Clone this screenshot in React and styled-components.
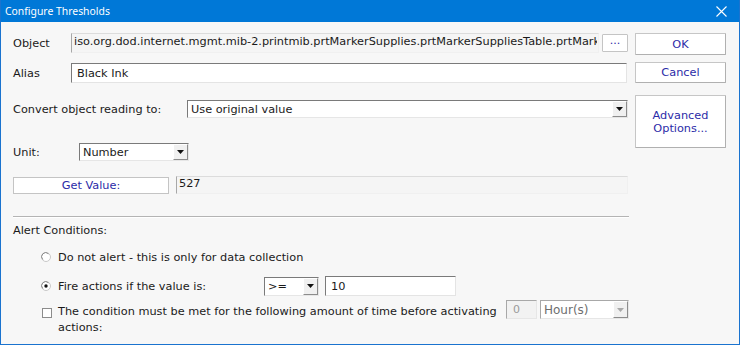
import React from 'react';
import styled, { createGlobalStyle } from 'styled-components';

const GlobalStyle = createGlobalStyle`
    html, body {
        margin: 0;
        padding: 0;
        background: #ffffff;
    }
    * {
        box-sizing: border-box;
    }
`

const OBJECT_PATH = 'iso.org.dod.internet.mgmt.mib-2.printmib.prtMarkerSupplies.prtMarkerSuppliesTable.prtMarkerSuppliesEntry.prtMarkerSuppliesLevel'

// 창 닫기 아이콘
const CloseIcon = () => (
    <svg width="11" height="11" viewBox="0 0 11 11">
        <path d="M0.5 0.5 L10.5 10.5 M10.5 0.5 L0.5 10.5" stroke="#ffffff" strokeWidth="1.1" fill="none" />
    </svg>
)

const Radio = ({ checked }) => (
    <svg width="10" height="10" viewBox="0 0 10 10">
        <circle cx="5" cy="5" r="4.5" fill="#ffffff" stroke="#c8c8c8" strokeWidth="1" />
        <path d="M1.8 7.5 A4 4 0 0 1 7.5 1.8" stroke="#8a8a8a" strokeWidth="1" fill="none" />
        {checked && <circle cx="5" cy="5" r="1.7" fill="#111111" />}
    </svg>
)

const Select = ({ value, width, height = 18, disabled }) => (
    <SelectBox $width={width} $height={height} $disabled={disabled}>
        <SelectText $disabled={disabled}>{value}</SelectText>
        <ArrowBox>
            <svg width="7" height="4" viewBox="0 0 7 4">
                <path d="M0 0 L7 0 L3.5 4 Z" fill={disabled ? '#a8a8a8' : '#111111'} />
            </svg>
        </ArrowBox>
    </SelectBox>
)

const App = () => {
    return (
        <>
            <GlobalStyle />
            <Window>
                <TitleBar>
                    <Title>Configure Thresholds</Title>
                    <CloseIcon />
                </TitleBar>
                <Body>
                    <Main>
                        <Row>
                            <Label $width={58}>Object</Label>
                            <ReadField $width={528} $height={20} readOnly value={OBJECT_PATH} />
                            <SmallBtn>...</SmallBtn>
                        </Row>
                        <Row $top={10}>
                            <Label $width={58}>Alias</Label>
                            <TextField $width={556} $height={20} readOnly value="Black Ink" />
                        </Row>
                        <Row $top={17}>
                            <Label $width={174}>Convert object reading to:</Label>
                            <Select value="Use original value" width={441} />
                        </Row>
                        <Row $top={25}>
                            <Label $width={66}>Unit:</Label>
                            <Select value="Number" width={110} />
                        </Row>
                        <Row $top={15}>
                            <GetBtn>Get Value:</GetBtn>
                            <ReadField $width={452} $height={18} $gap={7} readOnly value="527" />
                        </Row>
                        <Separator />
                        <SectionTitle>Alert Conditions:</SectionTitle>
                        <OptionRow $top={10}>
                            <Radio />
                            <OptionText>Do not alert - this is only for data collection</OptionText>
                        </OptionRow>
                        <OptionRow $top={9}>
                            <Radio checked />
                            <OptionText $width={206}>Fire actions if the value is:</OptionText>
                            <Select value=">=" width={55} height={19} />
                            <TextField $width={131} $height={20} $gap={6} readOnly value="10" />
                        </OptionRow>
                        <CheckRow>
                            <CheckBox />
                            <WrapText>The condition must be met for the following amount of time before activating actions:</WrapText>
                            <TimeBox>
                                <DisabledField>0</DisabledField>
                                <Select value="Hour(s)" width={89} height={19} disabled />
                            </TimeBox>
                        </CheckRow>
                    </Main>
                    <Side>
                        <DialogBtn $height={22}>OK</DialogBtn>
                        <DialogBtn $height={21} $top={7}>Cancel</DialogBtn>
                        <DialogBtn $height={53} $top={12}>Advanced<br />Options...</DialogBtn>
                    </Side>
                </Body>
            </Window>
        </>
    );
}

const Window = styled.div`
    width: 740px;
    height: 345px;
    display: flex;
    flex-direction: column;
    background: #f7f7f7;
    border: 1px solid #1a73cf;
    border-top: 0;
    font-family: "DejaVu Sans", Verdana, sans-serif;
    font-size: 11.3px;
    color: #1a1a1a;
    overflow: hidden;
`

const TitleBar = styled.div`
    height: 22px;
    margin: 0 -1px;
    padding: 0 13px 0 5px;
    display: flex;
    align-items: center;
    justify-content: space-between;
    background: #0078d7;
`

const Title = styled.span`
    font-family: "Noto Sans", "Open Sans", sans-serif;
    font-size: 10.4px;
    color: #ffffff;
`

const Body = styled.div`
    display: flex;
    padding: 11px 0 0 12px;
`

const Main = styled.div`
    width: 616px;
    display: flex;
    flex-direction: column;
`

const Side = styled.div`
    width: 91px;
    margin-left: 6px;
    display: flex;
    flex-direction: column;
`

const Row = styled.div`
    display: flex;
    align-items: center;
    margin-top: ${props => props.$top || 0}px;
`

const Label = styled.span`
    width: ${props => props.$width}px;
    flex-shrink: 0;
    white-space: nowrap;
`

const TextField = styled.input`
    width: ${props => props.$width}px;
    height: ${props => props.$height}px;
    margin: 0 0 0 ${props => props.$gap || 0}px;
    flex-shrink: 0;
    padding: 0 5px;
    background: #ffffff;
    border: 1px solid #e4e4e4;
    border-top-color: #7a7a7a;
    border-left-color: #7a7a7a;
    border-radius: 0;
    outline: none;
    font-family: inherit;
    font-size: inherit;
    color: #1a1a1a;
`

const ReadField = styled(TextField)`
    background: #f5f5f5;
    padding: 0 1px 3px 2px;
    border-color: #f0f0f0;
    border-top-color: #dcdcdc;
    border-left-color: #a8a8a8;
`

const SmallBtn = styled.button`
    width: 26px;
    height: 18px;
    margin-left: 3px;
    padding: 0 0 4px;
    background: #ffffff;
    border: 1px solid #c4c4c4;
    border-radius: 1px;
    color: #2b2ba8;
    font-family: inherit;
    font-size: 11px;
    line-height: 10px;
`

const GetBtn = styled.button`
    width: 156px;
    height: 17px;
    padding: 0;
    background: #ffffff;
    border: 1px solid #c4c4c4;
    color: #2b2ba8;
    font-family: inherit;
    font-size: inherit;
`

const DialogBtn = styled.button`
    width: 91px;
    height: ${props => props.$height}px;
    margin-top: ${props => props.$top || 0}px;
    padding: 0;
    background: #ffffff;
    border: 1px solid #c6c6c6;
    border-right-color: #b0b0b0;
    border-bottom-color: #b0b0b0;
    border-radius: 1px;
    color: #2b2ba8;
    font-family: inherit;
    font-size: inherit;
    line-height: 13px;
`

const SelectBox = styled.div`
    width: ${props => props.$width}px;
    height: ${props => props.$height}px;
    flex-shrink: 0;
    display: flex;
    background: #ffffff;
    border: 1px solid #e6e6e6;
    border-top-color: ${props => props.$disabled ? '#a8a8a8' : '#7a7a7a'};
    border-left-color: ${props => props.$disabled ? '#a8a8a8' : '#7a7a7a'};
`

const SelectText = styled.span`
    flex: 1;
    padding: 0 3px;
    display: flex;
    align-items: center;
    white-space: nowrap;
    overflow: hidden;
    color: ${props => props.$disabled ? '#6e6e6e' : '#1a1a1a'};
    font-size: ${props => props.$disabled ? '12px' : 'inherit'};
`

const ArrowBox = styled.span`
    width: 15px;
    display: flex;
    align-items: center;
    justify-content: center;
    background: #f0f0f0;
    border: 1px solid #ffffff;
    border-right-color: #8c8c8c;
    border-bottom-color: #8c8c8c;
`

const Separator = styled.div`
    width: 616px;
    margin-top: 22px;
    border-top: 1px solid #b4b4b4;
    border-bottom: 1px solid #ffffff;
`

const SectionTitle = styled.div`
    margin-top: 6px;
    line-height: 13px;
`

const OptionRow = styled.div`
    display: flex;
    align-items: center;
    padding-left: 28px;
    margin-top: ${props => props.$top || 0}px;
    min-height: 20px;
`

const OptionText = styled.span`
    margin-left: 7px;
    width: ${props => props.$width ? props.$width + 'px' : 'auto'};
    flex-shrink: 0;
`

const CheckRow = styled.div`
    display: flex;
    align-items: flex-start;
    padding-left: 29px;
    margin-top: 9px;
`

const CheckBox = styled.span`
    width: 10px;
    height: 10px;
    margin-top: 3px;
    flex-shrink: 0;
    background: #ffffff;
    border: 1px solid #8c8c8c;
`

const WrapText = styled.span`
    width: 443px;
    margin-left: 6px;
    line-height: 16px;
    margin-top: -1px;
`

const TimeBox = styled.div`
    display: flex;
    gap: 3px;
    margin-left: 6px;
    margin-top: -5px;
`

const DisabledField = styled.div`
    width: 31px;
    height: 19px;
    padding: 0 6px;
    display: flex;
    align-items: center;
    background: #f2f2f2;
    border: 1px solid #e6e6e6;
    border-top-color: #a8a8a8;
    border-left-color: #a8a8a8;
    color: #9a9a9a;
    font-size: 11px;
`

export default App;
